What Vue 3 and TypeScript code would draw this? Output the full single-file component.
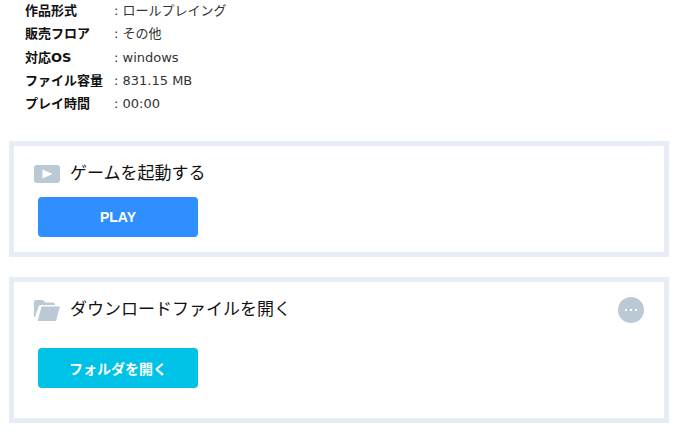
<script setup lang="ts">
const specs = [
  { label: '作品形式', value: 'ロールプレイング' },
  { label: '販売フロア', value: 'その他' },
  { label: '対応OS', value: 'windows' },
  { label: 'ファイル容量', value: '831.15 MB' },
  { label: 'プレイ時間', value: '00:00' }
]
</script>

<template>
  <div class="page">
    <dl class="specs">
      <div v-for="spec in specs" :key="spec.label" class="spec-row">
        <dt>{{ spec.label }}</dt>
        <dd>: {{ spec.value }}</dd>
      </div>
    </dl>

    <section class="panel panel-play">
      <h2 class="panel-title">
        <svg class="icon" width="26" height="18" viewBox="0 0 26 18">
          <rect width="26" height="18" rx="3" fill="#bbc8d6" />
          <path d="M8.5 4.5 L18.5 9 L8.5 13.5 Z" fill="#fff" />
        </svg>
        ゲームを起動する
      </h2>
      <button class="btn btn-play" type="button">PLAY</button>
    </section>

    <section class="panel panel-folder">
      <h2 class="panel-title">
        <svg class="icon" width="26" height="21" viewBox="0 0 26 21">
          <path d="M0 2 Q0 0 2 0 H8 Q9.5 0 10.5 1.5 L11 2.5 H19 Q21 2.5 21 4.5 V5 H7 Q5 5 4.4 7 L1 17 H0 Z" fill="#bbc8d6" />
          <path d="M7.5 6.5 H26 L22 21 H3.7 Z" fill="#bbc8d6" />
        </svg>
        ダウンロードファイルを開く
      </h2>
      <button class="more" type="button" aria-label="more">
        <span></span><span></span><span></span>
      </button>
      <button class="btn btn-folder" type="button">フォルダを開く</button>
    </section>
  </div>
</template>

<style>
html,
body {
  margin: 0;
  background: #fff;
}
</style>

<style scoped>
.page {
  width: 683px;
  height: 435px;
  overflow: hidden;
  box-sizing: border-box;
  padding-left: 9px;
  font-family: "DejaVu Sans", "Noto Sans CJK JP", sans-serif;
  color: #333;
}

.specs {
  margin: 0;
  padding: 0 0 0 16px;
  height: 141px;
  box-sizing: border-box;
}

.spec-row {
  display: flex;
  height: 23.3px;
  line-height: 22px;
  font-size: 13px;
}

.spec-row dt {
  width: 89px;
  font-weight: bold;
  color: #111;
  white-space: nowrap;
}

.spec-row dd {
  margin: 0;
}

.panel {
  position: relative;
  width: 660px;
  box-sizing: border-box;
  border: 5px solid #e7edf7;
  padding: 13px 0 0 20px;
}

.panel-play {
  height: 116px;
  margin-bottom: 20px;
}

.panel-folder {
  height: 146px;
}

.panel-title {
  display: flex;
  align-items: center;
  gap: 10px;
  margin: 0;
  height: 24px;
  font-size: 17px;
  font-weight: normal;
  color: #111;
}

.icon {
  margin-top: 6px;
}

.btn {
  display: block;
  width: 160px;
  height: 40px;
  margin-left: 4px;
  border: none;
  border-radius: 4px;
  color: #fff;
  font-size: 14px;
  font-weight: bold;
  font-family: "Liberation Sans", "Noto Sans CJK JP", sans-serif;
}

.btn-play {
  margin-top: 14px;
  background: #308fff;
}

.btn-folder {
  margin-top: 29px;
  background: #00c1e6;
}

.more {
  position: absolute;
  top: 15px;
  right: 20px;
  display: flex;
  align-items: center;
  justify-content: center;
  gap: 3px;
  width: 26px;
  height: 26px;
  padding: 0;
  border: none;
  border-radius: 50%;
  background: #bbc8d6;
}

.more span {
  width: 2px;
  height: 2px;
  background: #fff;
}
</style>
